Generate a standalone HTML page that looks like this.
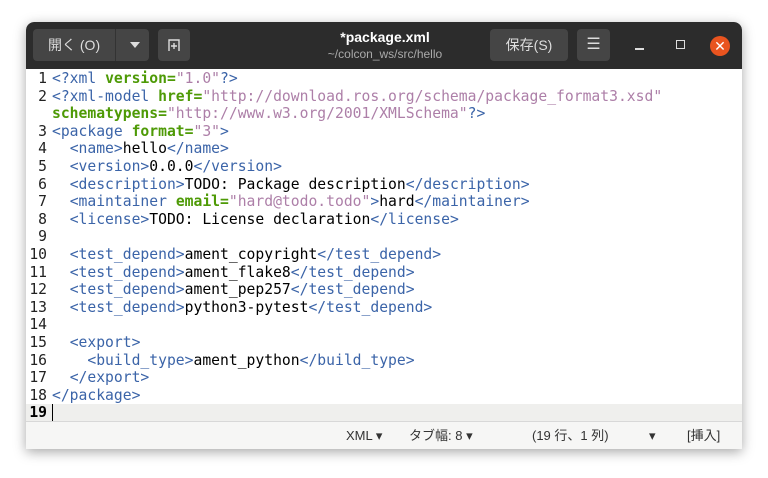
<!DOCTYPE html>
<html><head><meta charset="utf-8"><style>
body{margin:0;width:768px;height:478px;background:#fff;position:relative;overflow:hidden;font-family:"Liberation Sans","Noto Sans CJK JP",sans-serif}
.win{position:absolute;left:26px;top:22px;width:716px;height:427px;background:#fff;border-radius:8px 8px 0 0;box-shadow:0 3px 12px rgba(0,0,0,.35);overflow:hidden}
.hdr{position:absolute;left:0;top:0;width:716px;height:47px;background:#2c2c2c;border-radius:8px 8px 0 0}
.btn{position:absolute;top:7px;height:32px;background:#454545;border-radius:4px;color:#ddd;font-size:14px;line-height:32px;text-align:center}
.title{position:absolute;left:250px;width:218px;top:7px;text-align:center;color:#fff;font-weight:bold;font-size:14px}
.sub{position:absolute;left:250px;width:218px;top:25px;text-align:center;color:#aaa;font-size:12px}
.code{position:absolute;left:0;top:48px;width:716px;font-family:"DejaVu Sans Mono",monospace;font-size:14.7px;line-height:17.6px;color:#000}
.r{height:17.6px;position:relative;white-space:pre}
.n{display:inline-block;width:21px;text-align:right;color:#222;margin-right:5px}
.t{color:#3b64a8}.a{color:#4e9a06;font-weight:bold}.v{color:#ad7fa8}
.cur{background:#efefed}
.sb{position:absolute;left:0;top:399px;width:716px;height:28px;background:#f6f6f5;border-top:1px solid #d8d8d8;font-size:13px;color:#333;line-height:28px}
.sb span{position:absolute}
</style></head><body>
<div class="win">
<div class="hdr">
<div class="btn" style="left:7px;width:116px;text-align:left"><span style="margin-left:15px">開く (O)</span><span style="position:absolute;left:82px;top:0;width:1px;height:32px;background:#333"></span><span style="position:absolute;left:97px;top:13px;width:0;height:0;border-left:5px solid transparent;border-right:5px solid transparent;border-top:6px solid #ddd"></span></div>
<div class="btn" style="left:132px;width:32px"><svg width="16" height="16" viewBox="0 0 16 16" style="margin-top:8px"><path d="M3 14V3h10v11M8 6v6M5 9h6" stroke="#ddd" stroke-width="1.4" fill="none"/></svg></div>
<div class="title">*package.xml</div><div class="sub">~/colcon_ws/src/hello</div>
<div class="btn" style="left:464px;width:78px">保存(S)</div>
<div class="btn" style="left:551px;width:33px;font-size:16px">☰</div>
<div style="position:absolute;left:609px;top:26px;width:9px;height:1.5px;background:#ddd"></div>
<div style="position:absolute;left:650px;top:18px;width:7px;height:7px;border:1.5px solid #ddd"></div>
<div style="position:absolute;left:684px;top:14px;width:20px;height:20px;border-radius:50%;background:#e9541f;color:#fff;text-align:center;line-height:20px;font-size:14px">✕</div>
</div>
<div class="code"><div class="r"><span class="n">1</span><span class="t">&lt;?xml </span><span class="a">version=</span><span class="v">"1.0"</span><span class="t">?&gt;</span></div><div class="r"><span class="n">2</span><span class="t">&lt;?xml-model </span><span class="a">href=</span><span class="v">"http://download.ros.org/schema/package_format3.xsd"</span></div><div class="r"><span class="n"> </span><span class="a">schematypens=</span><span class="v">"http://www.w3.org/2001/XMLSchema"</span><span class="t">?&gt;</span></div><div class="r"><span class="n">3</span><span class="t">&lt;package </span><span class="a">format=</span><span class="v">"3"</span><span class="t">&gt;</span></div><div class="r"><span class="n">4</span>  <span class="t">&lt;name&gt;</span>hello<span class="t">&lt;/name&gt;</span></div><div class="r"><span class="n">5</span>  <span class="t">&lt;version&gt;</span>0.0.0<span class="t">&lt;/version&gt;</span></div><div class="r"><span class="n">6</span>  <span class="t">&lt;description&gt;</span>TODO: Package description<span class="t">&lt;/description&gt;</span></div><div class="r"><span class="n">7</span>  <span class="t">&lt;maintainer </span><span class="a">email=</span><span class="v">"hard@todo.todo"</span><span class="t">&gt;</span>hard<span class="t">&lt;/maintainer&gt;</span></div><div class="r"><span class="n">8</span>  <span class="t">&lt;license&gt;</span>TODO: License declaration<span class="t">&lt;/license&gt;</span></div><div class="r"><span class="n">9</span></div><div class="r"><span class="n">10</span>  <span class="t">&lt;test_depend&gt;</span>ament_copyright<span class="t">&lt;/test_depend&gt;</span></div><div class="r"><span class="n">11</span>  <span class="t">&lt;test_depend&gt;</span>ament_flake8<span class="t">&lt;/test_depend&gt;</span></div><div class="r"><span class="n">12</span>  <span class="t">&lt;test_depend&gt;</span>ament_pep257<span class="t">&lt;/test_depend&gt;</span></div><div class="r"><span class="n">13</span>  <span class="t">&lt;test_depend&gt;</span>python3-pytest<span class="t">&lt;/test_depend&gt;</span></div><div class="r"><span class="n">14</span></div><div class="r"><span class="n">15</span>  <span class="t">&lt;export&gt;</span></div><div class="r"><span class="n">16</span>    <span class="t">&lt;build_type&gt;</span>ament_python<span class="t">&lt;/build_type&gt;</span></div><div class="r"><span class="n">17</span>  <span class="t">&lt;/export&gt;</span></div><div class="r"><span class="n">18</span><span class="t">&lt;/package&gt;</span></div><div class="r cur"><span class="n" style="font-weight:bold;color:#000">19</span><span style="border-left:1px solid #000"></span></div></div>
<div class="sb"><span style="left:320px">XML ▾</span><span style="left:383px">タブ幅: 8 ▾</span><span style="left:506px">(19 行、1 列)</span><span style="left:623px">▾</span><span style="left:661px">[挿入]</span></div>
</div>
</body></html>
